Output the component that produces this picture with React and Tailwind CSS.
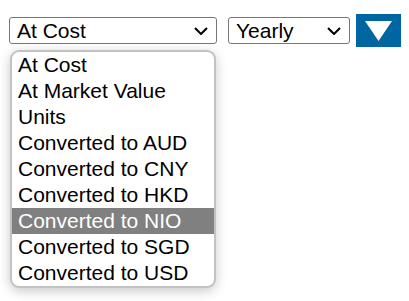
import React from 'react';

const options = [
	'At Cost',
	'At Market Value',
	'Units',
	'Converted to AUD',
	'Converted to CNY',
	'Converted to HKD',
	'Converted to NIO',
	'Converted to SGD',
	'Converted to USD'
];

function Chevron() {
	return (
		<svg width="14" height="8" viewBox="0 0 14 8" className="shrink-0">
			<path d="M1 1 L7 7 L13 1" fill="none" stroke="#000" strokeWidth="2" />
		</svg>
	);
}

function FakeSelect({ label, width, children }) {
	return (
		<div className={`relative ${width}`}>
			<div className="h-[27px] flex items-center justify-between border border-[#767676] rounded-[3px] bg-white pl-[7px] pr-[8px]">
				<span className="text-[21px] leading-none text-black">{label}</span>
				<Chevron />
			</div>
			{children}
		</div>
	);
}

export default function App() {
	const selected = 'Converted to NIO';

	return (
		<div className="w-[409px] h-[301px] bg-white overflow-hidden" style={{ fontFamily: '"Liberation Sans", Arial, sans-serif' }}>
			<div className="flex items-center pl-[9px] pt-[14px]">
				<FakeSelect label="At Cost" width="w-[208px]">
					{/* open dropdown list */}
					<div className="absolute left-[1px] top-[33px] w-[206px] border-2 border-[#c2c2c2] rounded-[9px] bg-white overflow-hidden shadow-[0_3px_12px_rgba(0,0,0,0.22)] z-10">
						{options.map((opt) => (
							<div
								key={opt}
								className={`h-[26px] flex items-center pl-[6px] pb-[2px] text-[21px] leading-none whitespace-nowrap ${opt === selected ? 'bg-[#808080] text-white' : 'text-black'}`}
							>
								{opt}
							</div>
						))}
					</div>
				</FakeSelect>
				<div className="ml-[11px]">
					<FakeSelect label="Yearly" width="w-[122px]" />
				</div>
				<button className="ml-[6px] w-[45px] h-[33px] bg-[#0066a2] flex items-center justify-center">
					<svg width="27" height="20" viewBox="0 0 27 20">
						<polygon points="0,0 27,0 13.5,20" fill="#fff" />
					</svg>
				</button>
			</div>
		</div>
	);
}
